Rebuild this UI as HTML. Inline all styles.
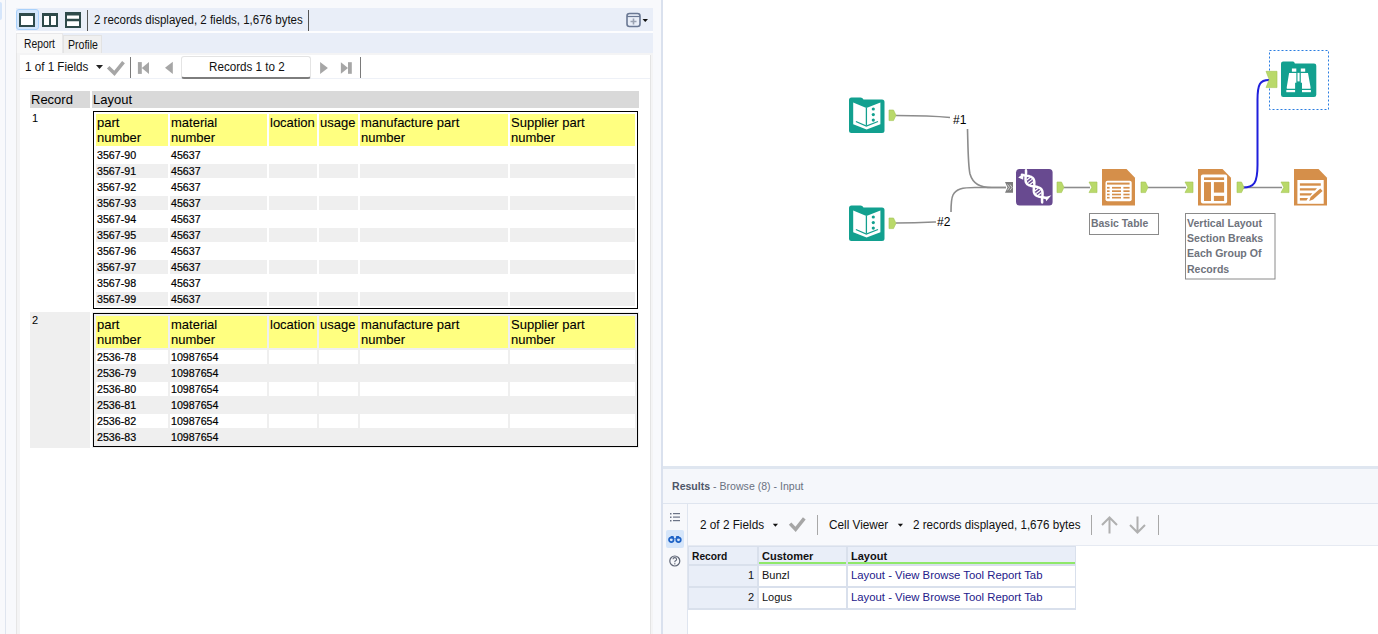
<!DOCTYPE html>
<html><head><meta charset="utf-8">
<style>
*{margin:0;padding:0;box-sizing:border-box}
html,body{width:1378px;height:634px;overflow:hidden;background:#f8f9fc;font-family:"Liberation Sans",sans-serif;position:relative}
.a{position:absolute}
.t{position:absolute;white-space:nowrap;line-height:1}
/* report table */
.rt{position:absolute;left:28px;top:89px;border-collapse:separate;border-spacing:2px;table-layout:fixed}
.rt td{padding:0;vertical-align:top}
.rt th{background:#d9d9d9;font-weight:normal;text-align:left;font-size:13px;height:17px;padding:0 0 0 1px;line-height:17px;color:#000}
.rt td.rn{font-size:11px;padding:2px 0 0 2px;color:#000}
.it{border:1px solid #000;border-collapse:separate;border-spacing:2px;table-layout:fixed;margin:1px 0 1px 1px;width:545px}
.it td{padding:0 0 0 1px;-webkit-text-stroke:0.2px #000;font-size:10.67px;height:14px;line-height:14px;color:#000;white-space:nowrap;overflow:hidden}
.it tr.h td{background:#ffff80;-webkit-text-stroke:0.1px #000;font-size:13px;line-height:15px;height:32px;padding:1px 0 0 1px;white-space:normal}
.it tr.g td{background:#efefef}
.it tr.w td{background:#fff}
</style></head><body>
<!-- left strip -->
<div class="a" style="left:0;top:2px;width:2px;height:18px;background:#d6e6fb;border-radius:0 2px 2px 0"></div>
<div class="a" style="left:5px;top:0;width:1px;height:634px;background:#dfe5ef"></div>
<!-- left panel toolbar -->
<div class="a" style="left:16px;top:8px;width:637px;height:23px;background:#e9eef8"></div>
<div class="a" style="left:16px;top:9px;width:23px;height:21px;background:#d4e6fb;border:1px solid #a9d1fb;border-radius:3px"></div>
<div class="t" style="left:94px;top:14px;font-size:12px;color:#111;transform:scaleX(0.96);transform-origin:0 0">2 records displayed, 2 fields, 1,676 bytes</div>
<div class="a" style="left:87px;top:10px;width:1px;height:21px;background:#555"></div>
<div class="a" style="left:308px;top:10px;width:1px;height:21px;background:#555"></div>
<div class="a" style="left:16px;top:31px;width:637px;height:2px;background:#fdfdfe"></div>
<!-- tabs strip -->
<div class="a" style="left:16px;top:33px;width:637px;height:20px;background:#e9eef8"></div>
<div class="a" style="left:16px;top:33px;width:47px;height:21px;background:#f8f8f8;border:1px solid #e8e8ea;border-bottom:none"></div>
<div class="a" style="left:63px;top:35px;width:39px;height:18px;background:#f0f0f0;border:1px solid #e3e3e3;border-bottom:none"></div>
<div class="t" style="left:24px;top:38px;font-size:12px;color:#111;transform:scaleX(0.86);transform-origin:0 0">Report</div>
<div class="t" style="left:68px;top:39px;font-size:12px;color:#111;transform:scaleX(0.88);transform-origin:0 0">Profile</div>
<!-- content -->
<div class="a" style="left:16px;top:53px;width:637px;height:581px;background:#f4f4f5;border-left:1px solid #e6e6e6"></div>
<div class="a" style="left:20px;top:55px;width:631px;height:579px;background:#fff;border-right:1px solid #e4e4e4"></div>
<div class="a" style="left:20px;top:78px;width:630px;height:1px;background:#eef1f7"></div>
<div class="t" style="left:25px;top:61px;font-size:12px;color:#111;transform:scaleX(0.97);transform-origin:0 0">1 of 1 Fields</div>
<div class="t" style="left:209px;top:61px;font-size:12px;color:#111;transform:scaleX(0.97);transform-origin:0 0">Records 1 to 2</div>
<div class="a" style="left:181px;top:56px;width:130px;height:23px;border:1px solid #e4e4e4;border-bottom:2px solid #7d7d7d;border-radius:3px"></div>
<div class="a" style="left:130px;top:57px;width:1px;height:21px;background:#7a7a7a"></div>
<div class="a" style="left:360px;top:57px;width:1px;height:21px;background:#7a7a7a"></div>

<table class="rt">
<colgroup><col style="width:60px"><col style="width:547px"></colgroup>
<tr><th>Record</th><th>Layout</th></tr>
<tr><td class="rn" style="background:#fff">1</td><td style="background:#fff">
<table class="it"><colgroup><col style="width:72px"><col style="width:97px"><col style="width:48px"><col style="width:39px"><col style="width:148px"><col style="width:125px"></colgroup>
<tr class="h"><td>part<br>number</td><td>material<br>number</td><td>location</td><td>usage</td><td>manufacture part<br>number</td><td>Supplier part<br>number</td></tr>
<tr class="w"><td>3567-90</td><td>45637</td><td></td><td></td><td></td><td></td></tr>
<tr class="g"><td>3567-91</td><td>45637</td><td></td><td></td><td></td><td></td></tr>
<tr class="w"><td>3567-92</td><td>45637</td><td></td><td></td><td></td><td></td></tr>
<tr class="g"><td>3567-93</td><td>45637</td><td></td><td></td><td></td><td></td></tr>
<tr class="w"><td>3567-94</td><td>45637</td><td></td><td></td><td></td><td></td></tr>
<tr class="g"><td>3567-95</td><td>45637</td><td></td><td></td><td></td><td></td></tr>
<tr class="w"><td>3567-96</td><td>45637</td><td></td><td></td><td></td><td></td></tr>
<tr class="g"><td>3567-97</td><td>45637</td><td></td><td></td><td></td><td></td></tr>
<tr class="w"><td>3567-98</td><td>45637</td><td></td><td></td><td></td><td></td></tr>
<tr class="g"><td>3567-99</td><td>45637</td><td></td><td></td><td></td><td></td></tr>
</table></td></tr>
<tr><td class="rn" style="background:#efefef">2</td><td style="background:#efefef">
<table class="it"><colgroup><col style="width:72px"><col style="width:97px"><col style="width:48px"><col style="width:39px"><col style="width:148px"><col style="width:125px"></colgroup>
<tr class="h"><td>part<br>number</td><td>material<br>number</td><td>location</td><td>usage</td><td>manufacture part<br>number</td><td>Supplier part<br>number</td></tr>
<tr class="w"><td>2536-78</td><td>10987654</td><td></td><td></td><td></td><td></td></tr>
<tr class="g"><td>2536-79</td><td>10987654</td><td></td><td></td><td></td><td></td></tr>
<tr class="w"><td>2536-80</td><td>10987654</td><td></td><td></td><td></td><td></td></tr>
<tr class="g"><td>2536-81</td><td>10987654</td><td></td><td></td><td></td><td></td></tr>
<tr class="w"><td>2536-82</td><td>10987654</td><td></td><td></td><td></td><td></td></tr>
<tr class="g"><td>2536-83</td><td>10987654</td><td></td><td></td><td></td><td></td></tr>
</table></td></tr>
</table>

<!-- panel divider -->
<div class="a" style="left:661px;top:0;width:2px;height:634px;background:#dae1ee"></div>
<!-- canvas -->
<div class="a" style="left:663px;top:0;width:715px;height:466px;background:#fff"></div>

<!-- canvas svg -->
<svg class="a" style="left:0;top:0" width="1378" height="466" viewBox="0 0 1378 466">
<defs>
<g id="inp">
<path d="M0,3 Q0,0.5 2.5,0.5 L11.5,0.5 Q13.5,0.5 14.5,2.5 L33,2.5 Q35.5,2.5 35.5,5 L35.5,33.5 Q35.5,36 33,36 L2.5,36 Q0,36 0,33.5 Z" fill="#12a08f"/>
<path d="M4.2,5.5 L17.4,11 L31.4,5.5 L31.4,27.2 L17.6,32.4 L4.2,27.2 Z" fill="#fff"/>
<path d="M17.4,11 L17.4,28.6" stroke="#12a08f" stroke-width="1.3"/>
<path d="M6.9,24.5 L17.3,29 L29,24.5" stroke="#12a08f" stroke-width="1.3" fill="none"/>
<circle cx="24.3" cy="12" r="1.6" fill="#12a08f"/><circle cx="24.3" cy="17.6" r="1.6" fill="#12a08f"/><circle cx="24.3" cy="23.1" r="1.6" fill="#12a08f"/>
</g>
<path id="doc" d="M0,0 L24.5,0 L33,8.8 L33,36.5 L0,36.5 Z" fill="#d58f4a"/>
<path id="aout" d="M0,0 L4.5,0 L7,5.3 L4.5,10.6 L0,10.6 Z" fill="#b9d96a" stroke="#a3c552" stroke-width="0.6"/>
<path id="ain" d="M0,0 L8,0 L8,10.6 L0,10.6 L2.8,5.3 Z" fill="#b9d96a" stroke="#a3c552" stroke-width="0.6"/>
</defs>
<!-- connections -->
<g fill="none" stroke="#8c8c8c" stroke-width="1.6">
<path d="M896,115.5 C920,115.5 935,116 950,117.5"/>
<path d="M967.5,129 C968,145 968,165 970,174 C973,184 980,187.5 992,187.5 L1006,187.5"/>
<path d="M896,223 C915,223 925,222.5 936,222"/>
<path d="M951,212 C951,205 951,199 953,195 C956,189 962,187.5 975,187.5 L1006,187.5"/>
<path d="M1064,187.5 L1090,187.5"/>
<path d="M1148,187.5 L1186,187.5"/>
<path d="M1244,187.5 L1282,187.5"/>
</g>
<path d="M1243,187.5 C1254,187.5 1257.5,183 1257.5,165 L1257.5,100 C1257.5,84 1260,80 1269,80" fill="none" stroke="#1f1fdc" stroke-width="2"/>
<text x="953" y="124" font-size="12" fill="#000" font-family="Liberation Sans">#1</text>
<text x="937" y="225.5" font-size="12" fill="#000" font-family="Liberation Sans">#2</text>
<!-- input tools -->
<use href="#inp" x="849" y="97"/>
<use href="#aout" x="889" y="110"/>
<use href="#inp" x="849" y="205"/>
<use href="#aout" x="889" y="218"/>
<!-- DNA -->
<rect x="1016" y="169" width="36.6" height="36.5" rx="3.5" fill="#684a90"/>
<g transform="translate(1016,169)" fill="none" stroke="#fff" stroke-linecap="round" stroke-linejoin="round">
<path stroke-width="2.5" d="M5.91,5.81 L6.93,6.07 L8.00,6.30 L9.12,6.49 L10.24,6.67 L11.36,6.86 L12.45,7.07 L13.48,7.33 L14.44,7.64 L15.31,8.01 L16.08,8.47 L16.74,9.01 L17.28,9.64 L17.70,10.36 L18.00,11.18 L18.20,12.07 L18.30,13.04 L18.31,14.07 L18.26,15.15 L18.17,16.27 L18.05,17.40 L17.93,18.53 L17.84,19.65 L17.79,20.73 L17.80,21.76 L17.90,22.73 L18.10,23.62 L18.40,24.44 L18.82,25.16 L19.36,25.79 L20.02,26.33 L20.79,26.79 L21.66,27.16 L22.62,27.47 L23.65,27.73 L24.74,27.94 L25.86,28.13 L26.98,28.31 L28.10,28.50 L29.17,28.73 L30.19,28.99"/>
<path stroke-width="2.5" d="M9.96,1.35 L10.05,2.39 L10.06,3.50 L9.99,4.66 L9.88,5.86 L9.75,7.07 L9.63,8.27 L9.55,9.44 L9.54,10.56 L9.61,11.62 L9.78,12.60 L10.08,13.48 L10.51,14.27 L11.07,14.95 L11.77,15.53 L12.59,16.01 L13.53,16.41 L14.57,16.73 L15.68,16.98 L16.85,17.20 L18.05,17.40 L19.25,17.60 L20.42,17.82 L21.53,18.07 L22.57,18.39 L23.51,18.79 L24.33,19.27 L25.03,19.85 L25.59,20.53 L26.02,21.32 L26.32,22.20 L26.49,23.18 L26.56,24.24 L26.55,25.36 L26.47,26.53 L26.35,27.73 L26.22,28.94 L26.11,30.14 L26.04,31.30 L26.05,32.41 L26.14,33.45"/>
<path stroke-width="1.2" d="M13.72,8.73 L10.83,10.95 M15.72,10.63 L12.13,13.37 M17.02,13.05 L14.13,15.27 M19.08,21.75 L21.97,19.53 M20.38,24.17 L23.97,21.43 M22.38,26.07 L25.27,23.85"/>
</g>
<path d="M1018.2,177.6 L1023.4,173.6 L1023.2,179.8 Z M1051.4,195.3 L1045.4,197.1 L1046.2,201.2 Z" fill="#fff"/>
<path d="M1005,182 L1013,182 L1013,192.7 L1005,192.7 L1007.5,187.4 Z" fill="#7d7d7d"/>
<path d="M1007.5,184.5 L1009.5,187.4 L1007.5,190.3 M1010,184.5 L1012,187.4 L1010,190.3" stroke="#ddd" stroke-width="0.9" fill="none"/>
<use href="#aout" x="1057" y="182"/>
<!-- Basic table -->
<use href="#ain" x="1089" y="182"/>
<use href="#doc" x="1102" y="169"/>
<g transform="translate(1102,169)">
<rect x="3.5" y="11.7" width="26.2" height="20.6" rx="2" fill="#fff"/>
<g fill="#d58f4a">
<rect x="5" y="13.6" width="22.6" height="2"/>
<rect x="5" y="17.9" width="2.6" height="1.7"/><rect x="10" y="17.9" width="9" height="1.7"/><rect x="21.4" y="17.9" width="6.2" height="1.7"/>
<rect x="5" y="21.3" width="2.6" height="1.7"/><rect x="10" y="21.3" width="9" height="1.7"/><rect x="21.4" y="21.3" width="6.2" height="1.7"/>
<rect x="5" y="24.7" width="2.6" height="1.6"/><rect x="10" y="24.7" width="9" height="1.6"/><rect x="21.4" y="24.7" width="6.2" height="1.6"/>
<rect x="5" y="27.9" width="2.6" height="1.6"/><rect x="10" y="27.9" width="9" height="1.6"/><rect x="21.4" y="27.9" width="6.2" height="1.6"/>
</g></g>
<use href="#aout" x="1141" y="182"/>
<rect x="1089.5" y="213.5" width="69" height="21" fill="#fff" stroke="#8a8a8a" stroke-width="1"/>
<text transform="translate(1091,227) scale(0.95,1)" font-size="11" font-weight="bold" fill="#6f737c" font-family="Liberation Sans">Basic Table</text>
<!-- Layout -->
<use href="#ain" x="1185" y="182"/>
<use href="#doc" x="1198" y="169"/>
<g transform="translate(1198,169)">
<rect x="2.9" y="5.6" width="26.2" height="28.8" rx="2" fill="#fff"/>
<g fill="#d58f4a"><rect x="6" y="8.4" width="20.1" height="2.6"/><rect x="6" y="13.1" width="7" height="18.9"/><rect x="15.9" y="13.1" width="10.2" height="10.5"/><rect x="15.9" y="26.9" width="10.2" height="5.1"/></g>
</g>
<use href="#aout" x="1237" y="182"/>
<rect x="1185.5" y="213.5" width="89.5" height="65.5" fill="#fff" stroke="#8a8a8a" stroke-width="1"/>
<g font-size="11" font-weight="bold" fill="#6f737c" font-family="Liberation Sans" transform="translate(1187,0) scale(0.96,1)">
<text x="0" y="227">Vertical Layout</text>
<text x="0" y="242.2">Section Breaks</text>
<text x="0" y="257.4">Each Group Of</text>
<text x="0" y="272.6">Records</text>
</g>
<!-- Render -->
<use href="#ain" x="1281" y="182"/>
<use href="#doc" x="1294" y="169"/>
<g transform="translate(1294,169)">
<rect x="3.4" y="11" width="26.3" height="23.8" fill="#fff"/>
<g fill="#d58f4a"><rect x="5.9" y="14.3" width="20.9" height="2.4"/><path d="M5.9,19.2 L23,19.2 L21,21.5 L5.9,21.5 Z"/><path d="M5.9,24.2 L18.3,24.2 L16.5,26.5 L5.9,26.5 Z"/><path d="M5.9,28.9 L14,28.9 L12.5,31.6 L5.9,31.6 Z"/></g>
<path d="M15.2,32 L16.6,27.9 L26.3,19.4 L28.6,21.9 L19.1,30.4 Z" fill="#d58f4a"/>
</g>
<!-- Browse -->
<rect x="1269.5" y="50.5" width="59" height="59" fill="none" stroke="#2a7de1" stroke-width="1" stroke-dasharray="2,2"/>
<path d="M1266,71.3 L1277,71.3 L1277,87.6 L1266,87.6 L1269.2,79.5 Z" fill="#b9d96a" stroke="#a3c552" stroke-width="0.6"/>
<g transform="translate(1281,61.4)">
<path d="M0,2.3 Q0,0.2 2.2,0.2 L12,0.2 Q13.3,0.2 13.9,2.1 L33,2.1 Q35.3,2.1 35.3,4.4 L35.3,33.3 Q35.3,35.5 33,35.5 L2.2,35.5 Q0,35.5 0,33.3 Z" fill="#12a08f"/>
<g fill="#fff">
<rect x="10.9" y="7.1" width="4.4" height="3.2"/><rect x="19.8" y="7.1" width="4.4" height="3.2"/>
<path d="M8.1,11.5 L15.35,11.5 L15.35,21.3 L14.1,21.3 L14.1,27.3 L5.9,27.3 L5.7,26 Z"/>
<path d="M19.8,11.5 L27,11.5 L29.6,26 L29.5,27.3 L21,27.3 L21,21.3 L19.8,21.3 Z"/>
<rect x="16.5" y="11.5" width="2.1" height="8.5"/>
<rect x="5.3" y="28.6" width="8.8" height="2.2"/><rect x="21" y="28.6" width="8.9" height="2.2"/>
</g></g>
</svg>

<!-- results -->
<div class="a" style="left:663px;top:466px;width:715px;height:3px;background:#dfe6f0"></div>
<div class="a" style="left:663px;top:469px;width:715px;height:35px;background:#f5f7fb;border-bottom:1px solid #dfe5ef"></div>
<div class="a" style="left:663px;top:504px;width:715px;height:130px;background:#fff"></div>
<div class="a" style="left:663px;top:504px;width:25px;height:130px;background:#f7f8fb;border-right:1px solid #dfe5ef"></div>
<div class="a" style="left:688px;top:504px;width:690px;height:42px;background:#f8f9fc;border-bottom:1px solid #e6eaf2"></div>
<div class="t" style="left:672px;top:481px;font-size:11px;color:#6a7181;transform:scaleX(0.96);transform-origin:0 0"><b style="color:#4e5668">Results</b> - Browse (8) - Input</div>
<!-- results sidebar icons -->
<svg class="a" style="left:663px;top:504px" width="24" height="70">
<g fill="#6b7386"><rect x="7" y="9" width="1.5" height="1.5"/><rect x="7" y="12.5" width="1.5" height="1.5"/><rect x="7" y="16" width="1.5" height="1.5"/>
<rect x="10" y="9" width="7" height="1.2"/><rect x="10" y="12.5" width="7" height="1.2"/><rect x="10" y="16" width="7" height="1.2"/></g>
<rect x="3" y="26" width="18" height="18" rx="2" fill="#d6e6fa"/>
<g fill="none" stroke="#1f63c6" stroke-width="1.7"><circle cx="8.3" cy="35.8" r="2.3"/><circle cx="15.5" cy="35.8" r="2.3"/></g>
<path d="M6.3,34.5 L8,32 L10.5,32 L11,34 L12.8,34 L13.3,32 L15.8,32 L17.5,34.5 Z" fill="#1f63c6"/>
<circle cx="11.8" cy="57" r="5" fill="none" stroke="#5f6676" stroke-width="1.2"/>
<path d="M10,55.3 Q10,53.6 11.8,53.6 Q13.6,53.6 13.6,55.2 Q13.6,56.3 12.5,56.8 Q11.8,57.2 11.8,58.3" fill="none" stroke="#5f6676" stroke-width="1.1"/>
<rect x="11.2" y="59.2" width="1.2" height="1.2" fill="#5f6676"/>
</svg>
<!-- results toolbar -->
<div class="t" style="left:700px;top:519px;font-size:12px;color:#111;transform:scaleX(0.98);transform-origin:0 0">2 of 2 Fields</div>
<svg class="a" style="left:688px;top:505px" width="690" height="40">
<path d="M84.8,18.8 L90,18.8 L87.4,21.8 Z" fill="#111"/>
<path d="M102.1,18.6 L107.6,24.4 L116.3,13.4" stroke="#a6a6a6" stroke-width="3.5" fill="none"/>
<rect x="129" y="10" width="1" height="20" fill="#a8a8a8"/>
<path d="M209.8,18.8 L215,18.8 L212.4,21.8 Z" fill="#111"/>
<rect x="403" y="10" width="1" height="20" fill="#a8a8a8"/>
<path d="M421.5,28.5 L421.5,13 M414,20 L421.5,12.5 L429,20" stroke="#b0b0b0" stroke-width="2" fill="none"/>
<path d="M449.5,11.5 L449.5,27 M442,20 L449.5,27.5 L457,20" stroke="#b0b0b0" stroke-width="2" fill="none"/>
<rect x="470" y="10" width="1" height="20" fill="#a8a8a8"/>
</svg>
<div class="t" style="left:829px;top:519px;font-size:12px;color:#111;transform:scaleX(0.98);transform-origin:0 0">Cell Viewer</div>
<div class="t" style="left:913px;top:519px;font-size:12px;color:#111;transform:scaleX(0.97);transform-origin:0 0">2 records displayed, 1,676 bytes</div>
<!-- results grid -->
<div class="a" style="left:688px;top:546px;width:388px;height:64px;background:#d9e0ec"></div>
<div class="a" style="left:689px;top:547px;width:68px;height:17px;background:#e9eef8"></div>
<div class="a" style="left:759px;top:547px;width:87px;height:17px;background:#e9eef8"></div>
<div class="a" style="left:759px;top:562px;width:87px;height:2px;background:#8fe86a"></div>
<div class="a" style="left:848px;top:547px;width:227px;height:17px;background:#e9eef8"></div>
<div class="a" style="left:848px;top:562px;width:227px;height:2px;background:#8fe86a"></div>
<div class="a" style="left:689px;top:566px;width:68px;height:20px;background:#e9eef8"></div>
<div class="a" style="left:759px;top:566px;width:87px;height:20px;background:#fff"></div>
<div class="a" style="left:848px;top:566px;width:227px;height:20px;background:#fff"></div>
<div class="a" style="left:689px;top:588px;width:68px;height:20px;background:#e9eef8"></div>
<div class="a" style="left:759px;top:588px;width:87px;height:20px;background:#fff"></div>
<div class="a" style="left:848px;top:588px;width:227px;height:20px;background:#fff"></div>
<div class="t" style="left:692px;top:551px;font-size:11px;font-weight:bold;color:#111;transform:scaleX(0.93);transform-origin:0 0">Record</div>
<div class="t" style="left:762px;top:551px;font-size:11px;font-weight:bold;color:#111">Customer</div>
<div class="t" style="left:851px;top:551px;font-size:11px;font-weight:bold;color:#111">Layout</div>
<div class="t" style="left:748px;top:570px;font-size:11px;color:#111">1</div>
<div class="t" style="left:748px;top:592px;font-size:11px;color:#111">2</div>
<div class="t" style="left:762px;top:570px;font-size:11px;color:#111">Bunzl</div>
<div class="t" style="left:762px;top:592px;font-size:11px;color:#111">Logus</div>
<div class="t" style="left:851px;top:570px;font-size:11px;color:#24208a;transform:scaleX(1.03);transform-origin:0 0">Layout - View Browse Tool Report Tab</div>
<div class="t" style="left:851px;top:592px;font-size:11px;color:#24208a;transform:scaleX(1.03);transform-origin:0 0">Layout - View Browse Tool Report Tab</div>
<!-- left toolbar icons -->
<svg class="a" style="left:16px;top:8px" width="640" height="72">
<g fill="#fff" stroke="#2f4a4a" stroke-width="2">
<rect x="4" y="6" width="14" height="12"/>
<rect x="27" y="6" width="14" height="12"/><path d="M34,6 L34,18"/>
<rect x="50" y="5" width="14" height="14"/><path d="M50,12 L64,12" stroke-width="2.5"/>
</g>
<path d="M4,6.5 L18,6.5 M27,6.5 L41,6.5 M50,6 L64,6" stroke="#2f4a4a" stroke-width="3"/>
<rect x="611" y="5.5" width="13" height="13" rx="2.5" fill="none" stroke="#6a7894" stroke-width="1.6"/>
<path d="M611,8.5 L624,8.5" stroke="#6a7894" stroke-width="1.2"/>
<path d="M617.5,10.5 L617.5,16.5 M614.5,13.5 L620.5,13.5" stroke="#9aa2b2" stroke-width="1.6"/>
<path d="M626.5,11 L632,11 L629.25,14 Z" fill="#111"/>
<!-- nav toolbar -->
<path d="M80,57 L87,57 L83.5,61 Z" fill="#222"/>
<path d="M92.2,59.3 L98.4,65.4 L107.5,54.2" stroke="#a6a6a6" stroke-width="3.6" fill="none"/>
<rect x="121.9" y="54.1" width="3.9" height="11.8" fill="#a6a6a6"/><path d="M133,54.1 L133,65.9 L125.8,60 Z" fill="#a6a6a6"/>
<path d="M156.8,53.8 L156.8,65.9 L149,59.85 Z" fill="#a6a6a6"/>
<path d="M304.1,53.9 L304.1,66.1 L311.9,60 Z" fill="#a6a6a6"/>
<path d="M324.9,54.2 L324.9,65.8 L332,60 Z" fill="#a6a6a6"/><rect x="332" y="54.2" width="3.8" height="11.6" fill="#a6a6a6"/>
</svg>
</body></html>
